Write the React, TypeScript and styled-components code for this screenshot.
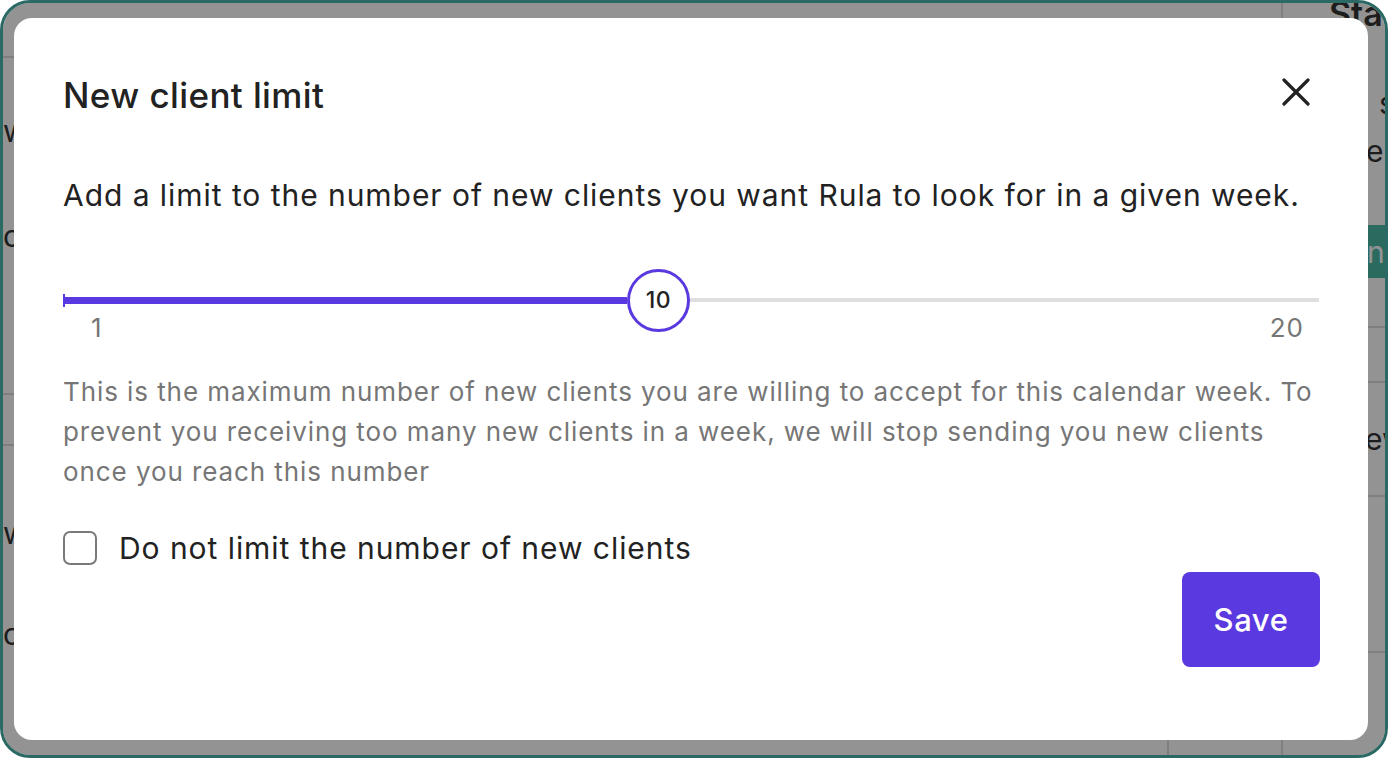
import React, { useState } from "react";
import styled, { createGlobalStyle } from "styled-components";

const GlobalStyle = createGlobalStyle`
  * { box-sizing: border-box; }
  body {
    margin: 0;
    background: #ffffff;
    font-family: Inter, "Noto Sans", sans-serif;
    color: #222222;
  }
`;

const Frame = styled.div`
  position: relative;
  width: 1388px;
  height: 758px;
  border: 3px solid #2b6a64;
  border-radius: 30px;
  overflow: hidden;
  background: #ffffff;
`;

// page behind the modal, only its edges show
const Page = styled.div`
  display: grid;
  grid-template-columns: 1fr 114px 104px;
  height: 100%;
  font-size: 30px;
  color: #333333;
`;

const Column = styled.div<{ $divider?: boolean }>`
  display: flex;
  flex-direction: column;
  border-left: ${(p) => (p.$divider ? "2px solid #dcdcdc" : "none")};
`;

const Cell = styled.div<{ $h: number; $pad?: number; $line?: boolean; $bold?: boolean; $edge?: boolean }>`
  height: ${(p) => p.$h}px;
  flex-shrink: 0;
  display: flex;
  align-items: center;
  padding-left: ${(p) => p.$pad ?? 0}px;
  border-bottom: ${(p) => (p.$line ? "2px solid #dcdcdc" : "none")};
  border-left: ${(p) => (p.$edge ? "2px solid #dcdcdc" : "none")};
  font-weight: ${(p) => (p.$bold ? 600 : 400)};
  font-size: ${(p) => (p.$bold ? 34 : 30)}px;
  white-space: nowrap;
  overflow: visible;
`;

const GreenChip = styled.div`
  height: 53px;
  flex-shrink: 0;
  margin: 46px 0 0 72px;
  background: #49b9a6;
  color: #ffffff;
  display: flex;
  align-items: center;
  padding-left: 12px;
  font-size: 30px;
`;

const Overlay = styled.div`
  position: absolute;
  inset: 0;
  background: rgba(0, 0, 0, 0.423);
`;

const Modal = styled.div`
  position: absolute;
  left: 11px;
  top: 15px;
  width: 1354px;
  height: 722px;
  background: #ffffff;
  border-radius: 18px;
  padding: 55px 48px 0 49px;
  display: flex;
  flex-direction: column;
`;

const Header = styled.div`
  display: flex;
  align-items: center;
  justify-content: space-between;
  height: 44px;
`;

const Title = styled.h2`
  margin: 0;
  font-size: 35px;
  font-weight: 500;
  line-height: 44px;
  color: #222222;
  letter-spacing: 0.4px;
`;

const CloseButton = styled.button`
  border: none;
  background: none;
  padding: 0;
  width: 30px;
  height: 30px;
  margin-right: 9px;
  margin-top: -6px;
  display: flex;
  align-items: center;
  justify-content: center;
  cursor: pointer;
`;

const Lead = styled.p`
  margin: 58px 0 0;
  font-size: 30px;
  line-height: 40px;
  color: #222222;
  letter-spacing: 0.95px;
  white-space: nowrap;
`;

const SliderRow = styled.div`
  margin-top: 73px;
  height: 24px;
  display: flex;
  align-items: center;
  width: 1256px;
`;

const Tick = styled.div`
  width: 2px;
  height: 13px;
  background: #5b39e0;
  flex-shrink: 0;
`;

const Filled = styled.div`
  height: 7px;
  background: #5b39e0;
  flex-shrink: 0;
`;

const Thumb = styled.div`
  width: 63px;
  height: 63px;
  flex-shrink: 0;
  border: 3px solid #5b39e0;
  border-radius: 50%;
  background: #ffffff;
  display: flex;
  align-items: center;
  justify-content: center;
  font-size: 23px;
  font-weight: 500;
  letter-spacing: 0.5px;
  color: #222222;
`;

const Rest = styled.div`
  flex: 1;
  height: 4px;
  background: #dedede;
`;

const Bounds = styled.div`
  display: flex;
  justify-content: space-between;
  width: 1256px;
  padding: 1px 15px 0 28px;
  font-size: 26px;
  line-height: 30px;
  letter-spacing: 1px;
  color: #767676;
`;

const Help = styled.p`
  margin: 29px 0 0;
  width: 1262px;
  font-size: 26px;
  line-height: 40px;
  color: #767676;
  letter-spacing: 0.92px;
`;

const CheckRow = styled.label`
  margin-top: 39px;
  display: flex;
  align-items: center;
  gap: 22px;
  font-size: 30px;
  line-height: 34px;
  color: #222222;
  cursor: pointer;
  letter-spacing: 0.95px;
`;

const Box = styled.span<{ $on: boolean }>`
  width: 34px;
  height: 34px;
  border: 2px solid #7a7a7a;
  border-radius: 7px;
  background: ${(p) => (p.$on ? "#5b39e0" : "#ffffff")};
  flex-shrink: 0;
`;

const Footer = styled.div`
  margin-top: 7px;
  display: flex;
  justify-content: flex-end;
`;

const SaveButton = styled.button`
  width: 138px;
  height: 95px;
  border: none;
  border-radius: 8px;
  background: #5b39e0;
  color: #ffffff;
  font-family: Inter, sans-serif;
  font-size: 31px;
  font-weight: 500;
  letter-spacing: 0.6px;
  cursor: pointer;
`;

const MIN = 1;
const MAX = 20;

export default function App() {
  const [value] = useState(10);
  const [noLimit, setNoLimit] = useState(false);
  const pct = ((value - MIN) / (MAX - MIN)) * 100;

  return (
    <>
      <GlobalStyle />
      <Frame>
        <Page>
          <Column>
            <Cell $h={55} $line />
            <Cell $h={146}>w</Cell>
            <Cell $h={64}>c</Cell>
            <Cell $h={127} $line />
            <Cell $h={51} $line />
            <Cell $h={174}>w</Cell>
            <Cell $h={28}>c</Cell>
          </Column>
          <Column>
            <Cell $h={560} />
            <Cell $h={195} $edge />
          </Column>
          <Column $divider>
            <Cell $h={20} $pad={46} $bold>Sta</Cell>
            <Cell $h={60} />
            <Cell $h={40} $pad={96}>s</Cell>
            <Cell $h={56} $pad={83}>e</Cell>
            <GreenChip>n</GreenChip>
            <Cell $h={50} $line />
            <Cell $h={55} $line />
            <Cell $h={114} $pad={82} $line>ew</Cell>
            <Cell $h={156} $line />
          </Column>
        </Page>
        <Overlay />
        <Modal role="dialog" aria-labelledby="limit-title">
          <Header>
            <Title id="limit-title">New client limit</Title>
            <CloseButton aria-label="Close">
              <svg width="28" height="28" viewBox="0 0 28 28">
                <path d="M2 2 L26 26 M26 2 L2 26" stroke="#222" strokeWidth="3.2" strokeLinecap="round" />
              </svg>
            </CloseButton>
          </Header>
          <Lead>
            Add a limit to the number of new clients you want Rula to look for in a given week.
          </Lead>
          <SliderRow>
            <Tick />
            <Filled style={{ width: `calc(${pct}% - 33px)` }} />
            <Thumb>{value}</Thumb>
            <Rest />
          </SliderRow>
          <Bounds>
            <span>{MIN}</span>
            <span>{MAX}</span>
          </Bounds>
          <Help>
            This is the maximum number of new clients you are willing to accept for this calendar week. To
            prevent you receiving too many new clients in a week, we will stop sending you new clients
            once you reach this number
          </Help>
          <CheckRow onClick={() => setNoLimit(!noLimit)}>
            <Box $on={noLimit} />
            Do not limit the number of new clients
          </CheckRow>
          <Footer>
            <SaveButton>Save</SaveButton>
          </Footer>
        </Modal>
      </Frame>
    </>
  );
}
